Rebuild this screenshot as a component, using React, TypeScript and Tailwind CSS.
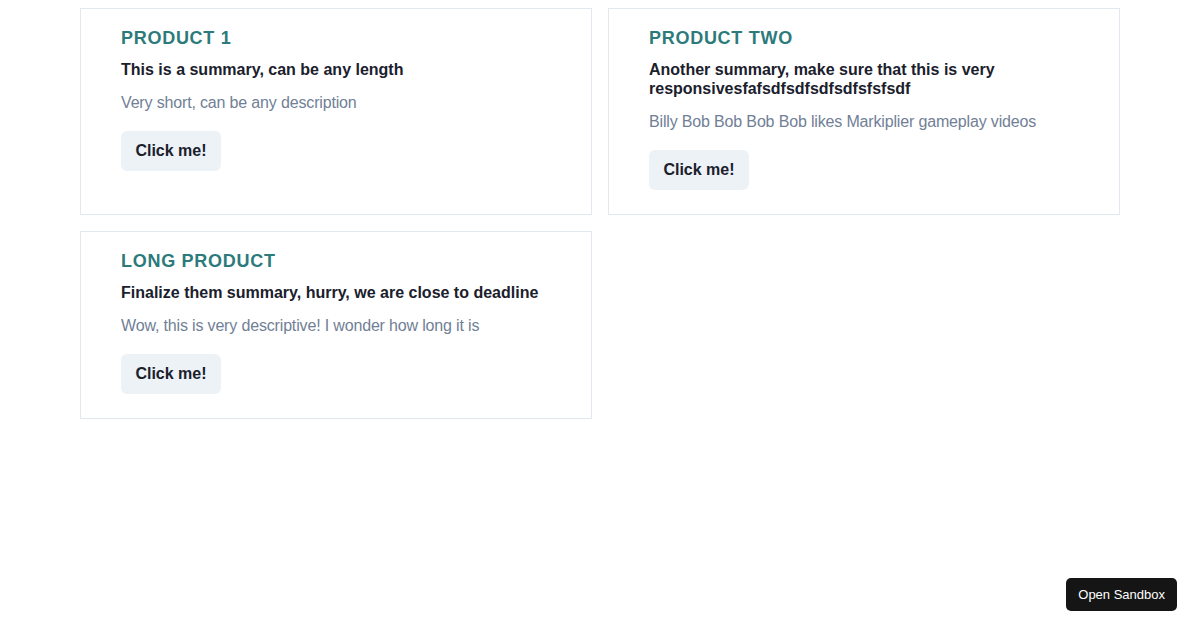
const products = [
  {
    title: "Product 1",
    summary: "This is a summary, can be any length",
    description: "Very short, can be any description",
  },
  {
    title: "Product Two",
    summary: "Another summary, make sure that this is very responsivesfafsdfsdfsdfsdfsfsfsdf",
    description: "Billy Bob Bob Bob Bob likes Markiplier gameplay videos",
  },
  {
    title: "Long Product",
    summary: "Finalize them summary, hurry, we are close to deadline",
    description: "Wow, this is very descriptive! I wonder how long it is",
  },
];

function ProductCard({ title, summary, description }: (typeof products)[number]) {
  return (
    <div className="border border-[#e2e8f0] px-10 pt-[19px] pb-6">
      <h2 className="text-[18px] leading-[1.2] font-bold uppercase tracking-[0.04em] text-[#2c7a7b]">
        {title}
      </h2>
      <p className="mt-[10px] text-base leading-[1.2] font-bold text-[#1a202c]">{summary}</p>
      <p className="mt-3 text-base leading-6 text-[#718096] tracking-[-0.01em]">{description}</p>
      <button className="mt-4 h-10 w-[100px] rounded-md bg-[#edf2f7] text-base font-bold text-[#1a202c]">
        Click me!
      </button>
    </div>
  );
}

export default function App() {
  return (
    <div className="min-h-[630px] bg-white font-['Liberation_Sans',Arial,sans-serif]">
      <div className="mx-auto w-[1040px] pt-2 grid grid-cols-2 gap-4">
        {products.map((p) => (
          <ProductCard key={p.title} {...p} />
        ))}
      </div>
      <button className="fixed right-[23px] bottom-[19px] h-[33px] px-3 rounded-[5px] bg-[#151515] text-[13px] text-white">
        Open Sandbox
      </button>
    </div>
  );
}
